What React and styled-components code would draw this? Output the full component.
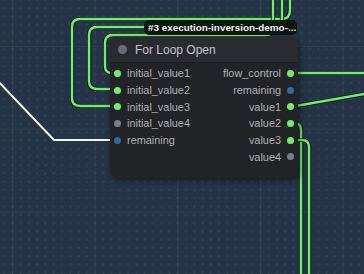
import styled, { createGlobalStyle } from 'styled-components';

const GlobalStyle = createGlobalStyle`
  html, body {
    margin: 0;
    padding: 0;
    background: #243446;
  }
`;

const Canvas = styled.div`
  position: relative;
  width: 364px;
  height: 274px;
  overflow: hidden;
  font-family: "Liberation Sans", Arial, sans-serif;
  background-color: #243446;
  background-image:
    linear-gradient(to right, rgba(255, 255, 255, 0.045) 1px, transparent 1px),
    linear-gradient(to bottom, rgba(255, 255, 255, 0.045) 1px, transparent 1px),
    radial-gradient(circle, rgba(255, 255, 255, 0.06) 1px, transparent 1.4px);
  background-size: 82.7px 82.7px, 82.7px 82.7px, 8.27px 8.27px;
  background-position: 12px 0, 0 46px, 0 4px;
`;

const Links = styled.svg`
  position: absolute;
  inset: 0;
  width: 364px;
  height: 274px;
`;

const Node = styled.div`
  position: absolute;
  left: 110px;
  top: 37px;
  width: 188px;
  height: 141px;
  display: flex;
  flex-direction: column;
  background: #222327;
  border-radius: 8px;
  box-shadow: 2px 3px 6px rgba(0, 0, 0, 0.45);
  overflow: hidden;
`;

const TitleBar = styled.div`
  height: 25px;
  display: flex;
  align-items: center;
  gap: 8px;
  padding: 0 0 0 8px;
  background: #2a2b30;
  border-bottom: 1px solid #1c1d21;
  color: #c4c4c8;
  font-size: 12px;
`;

const Dot = styled.span`
  flex: none;
  width: ${p => p.$size || 7}px;
  height: ${p => p.$size || 7}px;
  border-radius: 50%;
  background: ${p => p.$color};
`;

const Slots = styled.div`
  display: grid;
  grid-template-columns: 1fr 1fr;
  grid-auto-rows: 16.7px;
  padding-top: 2px;
`;

const Slot = styled.div`
  display: flex;
  align-items: center;
  gap: 6px;
  grid-column: ${p => (p.$out ? 2 : 1)};
  justify-content: ${p => (p.$out ? 'flex-end' : 'flex-start')};
  padding: ${p => (p.$out ? '0 4px 0 0' : '0 0 0 4px')};
  color: #b0b0b6;
  font-size: 10.9px;
  white-space: nowrap;
`;

const Badge = styled.div`
  position: absolute;
  left: 144px;
  top: 20px;
  width: 153px;
  height: 15px;
  box-sizing: border-box;
  padding: 0 2px 0 4px;
  display: flex;
  align-items: center;
  background: #0d170f;
  border-radius: 5px;
  color: #f2f2f2;
  font-size: 9.9px;
  font-weight: bold;
  white-space: nowrap;
  overflow: hidden;
`;

const GREEN = '#72ec6e';
const GREY = '#7c7c88';
const BLUE = '#2c6aa8';

const inputs = [
  { name: 'initial_value1', color: GREEN },
  { name: 'initial_value2', color: GREEN },
  { name: 'initial_value3', color: GREEN },
  { name: 'initial_value4', color: GREY },
  { name: 'remaining', color: BLUE },
];

const outputs = [
  { name: 'flow_control', color: GREEN },
  { name: 'remaining', color: BLUE },
  { name: 'value1', color: GREEN },
  { name: 'value2', color: GREEN },
  { name: 'value3', color: GREEN },
  { name: 'value4', color: GREY },
];

const greenLinks = [
  'M290 -4 V10 Q290 19 282 19 H80 Q72 19 72 27 V98 Q72 106 80 106 H117',
  'M282 -4 V19 Q282 27 274 27 H97 Q89 27 89 35 V81 Q89 89 97 89 H117',
  'M273 -4 V28 Q273 35 266 35 H113 Q105 35 105 43 V66 Q105 73 112 73 H117',
  'M290 73 H370',
  'M290 107 L370 93',
  'M290 123 H294 Q301 123 301 130 V280',
  'M290 140 H302 Q309 140 309 147 V280',
];

function Link({ d, color }) {
  return (
    <>
      <path d={d} fill="none" stroke="rgba(10,20,12,0.8)" strokeWidth="4.2" strokeLinecap="round" />
      <path d={d} fill="none" stroke={color} strokeWidth="2.4" strokeLinecap="round" />
    </>
  );
}

export default function App() {
  return (
    <>
      <GlobalStyle />
      <Canvas>
        <Links viewBox="0 0 364 274">
          <path d="M-4 79 L54 140 H117" fill="none" stroke="#f4f4f4" strokeWidth="2" />
          {greenLinks.map((d, i) => (
            <Link key={i} d={d} color={GREEN} />
          ))}
        </Links>
        <Node>
          <TitleBar>
            <Dot $color="#6b6b76" $size={9} />
            For Loop Open
          </TitleBar>
          <Slots>
            {inputs.map((s, i) => (
              <Slot key={'in' + i} style={{ gridRow: i + 1 }}>
                <Dot $color={s.color} />
                {s.name}
              </Slot>
            ))}
            {outputs.map((s, i) => (
              <Slot key={'out' + i} $out style={{ gridRow: i + 1 }}>
                {s.name}
                <Dot $color={s.color} />
              </Slot>
            ))}
          </Slots>
        </Node>
        <Badge>#3 execution-inversion-demo-...</Badge>
      </Canvas>
    </>
  );
}
